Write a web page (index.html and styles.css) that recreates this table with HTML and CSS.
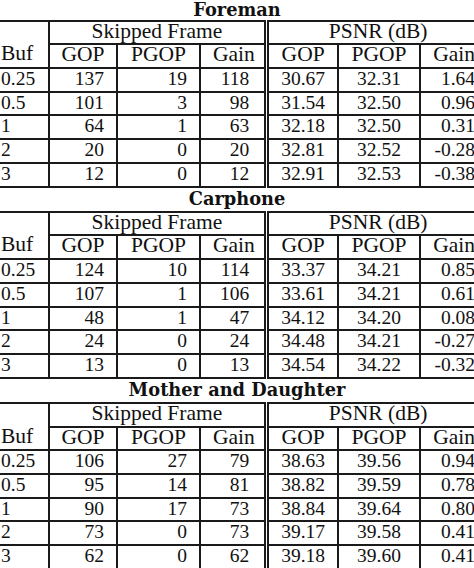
FILE: index.html
```html
<!DOCTYPE html>
<html>
<head>
<meta charset="utf-8">
<link rel="stylesheet" href="styles.css">
</head>
<body>
<div class="page">
  <section class="block">
    <div class="title">Foreman</div>
    <table class="tbl">
      <colgroup><col class="c-buf"><col class="c-gop"><col class="c-pgop"><col class="c-gain1"><col class="c-gop2"><col class="c-pgop2"><col class="c-gain2"></colgroup>
      <tr class="hr"><td class="buf-top"></td><td colspan="3" class="grp dbl">Skipped Frame</td><td colspan="3" class="grp">PSNR (dB)</td></tr>
      <tr class="hr"><td class="buf">Buf</td><td class="hd">GOP</td><td class="hd">PGOP</td><td class="hd dbl">Gain</td><td class="hd">GOP</td><td class="hd">PGOP</td><td class="hd">Gain</td></tr>
      <tr><td class="l">0.25</td><td class="r">137</td><td class="r">19</td><td class="r g1 dbl">118</td><td class="c">30.67</td><td class="c">32.31</td><td class="r">1.64</td></tr>
      <tr><td class="l">0.5</td><td class="r">101</td><td class="r">3</td><td class="r g1 dbl">98</td><td class="c">31.54</td><td class="c">32.50</td><td class="r">0.96</td></tr>
      <tr><td class="l">1</td><td class="r">64</td><td class="r">1</td><td class="r g1 dbl">63</td><td class="c">32.18</td><td class="c">32.50</td><td class="r">0.31</td></tr>
      <tr><td class="l">2</td><td class="r">20</td><td class="r">0</td><td class="r g1 dbl">20</td><td class="c">32.81</td><td class="c">32.52</td><td class="r">-0.28</td></tr>
      <tr><td class="l">3</td><td class="r">12</td><td class="r">0</td><td class="r g1 dbl">12</td><td class="c">32.91</td><td class="c">32.53</td><td class="r">-0.38</td></tr>
    </table>
  </section>
  <section class="block">
    <div class="title">Carphone</div>
    <table class="tbl">
      <colgroup><col class="c-buf"><col class="c-gop"><col class="c-pgop"><col class="c-gain1"><col class="c-gop2"><col class="c-pgop2"><col class="c-gain2"></colgroup>
      <tr class="hr"><td class="buf-top"></td><td colspan="3" class="grp dbl">Skipped Frame</td><td colspan="3" class="grp">PSNR (dB)</td></tr>
      <tr class="hr"><td class="buf">Buf</td><td class="hd">GOP</td><td class="hd">PGOP</td><td class="hd dbl">Gain</td><td class="hd">GOP</td><td class="hd">PGOP</td><td class="hd">Gain</td></tr>
      <tr><td class="l">0.25</td><td class="r">124</td><td class="r">10</td><td class="r g1 dbl">114</td><td class="c">33.37</td><td class="c">34.21</td><td class="r">0.85</td></tr>
      <tr><td class="l">0.5</td><td class="r">107</td><td class="r">1</td><td class="r g1 dbl">106</td><td class="c">33.61</td><td class="c">34.21</td><td class="r">0.61</td></tr>
      <tr><td class="l">1</td><td class="r">48</td><td class="r">1</td><td class="r g1 dbl">47</td><td class="c">34.12</td><td class="c">34.20</td><td class="r">0.08</td></tr>
      <tr><td class="l">2</td><td class="r">24</td><td class="r">0</td><td class="r g1 dbl">24</td><td class="c">34.48</td><td class="c">34.21</td><td class="r">-0.27</td></tr>
      <tr><td class="l">3</td><td class="r">13</td><td class="r">0</td><td class="r g1 dbl">13</td><td class="c">34.54</td><td class="c">34.22</td><td class="r">-0.32</td></tr>
    </table>
  </section>
  <section class="block">
    <div class="title">Mother and Daughter</div>
    <table class="tbl">
      <colgroup><col class="c-buf"><col class="c-gop"><col class="c-pgop"><col class="c-gain1"><col class="c-gop2"><col class="c-pgop2"><col class="c-gain2"></colgroup>
      <tr class="hr"><td class="buf-top"></td><td colspan="3" class="grp dbl">Skipped Frame</td><td colspan="3" class="grp">PSNR (dB)</td></tr>
      <tr class="hr"><td class="buf">Buf</td><td class="hd">GOP</td><td class="hd">PGOP</td><td class="hd dbl">Gain</td><td class="hd">GOP</td><td class="hd">PGOP</td><td class="hd">Gain</td></tr>
      <tr><td class="l">0.25</td><td class="r">106</td><td class="r">27</td><td class="r g1 dbl">79</td><td class="c">38.63</td><td class="c">39.56</td><td class="r">0.94</td></tr>
      <tr><td class="l">0.5</td><td class="r">95</td><td class="r">14</td><td class="r g1 dbl">81</td><td class="c">38.82</td><td class="c">39.59</td><td class="r">0.78</td></tr>
      <tr><td class="l">1</td><td class="r">90</td><td class="r">17</td><td class="r g1 dbl">73</td><td class="c">38.84</td><td class="c">39.64</td><td class="r">0.80</td></tr>
      <tr><td class="l">2</td><td class="r">73</td><td class="r">0</td><td class="r g1 dbl">73</td><td class="c">39.17</td><td class="c">39.58</td><td class="r">0.41</td></tr>
      <tr><td class="l">3</td><td class="r">62</td><td class="r">0</td><td class="r g1 dbl">62</td><td class="c">39.18</td><td class="c">39.60</td><td class="r">0.41</td></tr>
    </table>
  </section>
</div>
</body>
</html>
```
FILE: styles.css
```css
html, body {
  margin: 0;
  padding: 0;
  overflow: hidden;
  background: #fff;
}
body {
  width: 474px;
  height: 568px;
  color: #111;
  font-family: "Liberation Serif", "Times New Roman", serif;
}
.page {
  width: 500px;
  margin-left: -13px;
}
.block {
  display: flex;
  flex-direction: column;
}
.title {
  height: 23.3px;
  box-sizing: border-box;
  padding-top: 1.5px;
  line-height: 20.4px;
  font-family: "DejaVu Serif", "Liberation Serif", serif;
  font-size: 17.8px;
  font-weight: bold;
  text-align: center;
  color: #111;
}
.block:first-child .title {
  height: 19.7px;
  padding-top: 0;
}
.tbl {
  width: 500px;
  table-layout: fixed;
  border-collapse: collapse;
}
.c-buf { width: 60.5px; }
.c-gop { width: 68.5px; }
.c-pgop { width: 83px; }
.c-gain1 { width: 66.7px; }
.c-gop2 { width: 71.3px; }
.c-pgop2 { width: 82px; }
.c-gain2 { width: 68px; }
.tbl tr { height: 23.7px; }
.tbl td {
  border: 2px solid #1a1a1a;
  padding: 0 12px;
  vertical-align: top;
  line-height: 19px;
  font-size: 19.5px;
  white-space: nowrap;
}
.tbl td.dbl { border-right: 5px double #1a1a1a; }
.tbl .hr td { font-size: 21.5px; }
.tbl td.buf-top { border-bottom-style: hidden; }
.tbl td.buf { border-top-style: hidden; text-align: left; }
.tbl td.grp, .tbl td.hd, .tbl td.c { text-align: center; }
.tbl td.l { text-align: left; }
.tbl td.r { text-align: right; }
.tbl td.g1 { padding-right: 15px; }
```
